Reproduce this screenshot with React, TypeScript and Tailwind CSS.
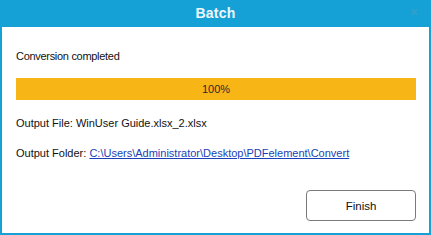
import React from "react";

export default function App() {
  return (
    <div
      className="w-[431px] h-[235px] bg-white flex flex-col border-x-2 border-b-2 border-[#16a1d6] overflow-hidden"
      style={{ fontFamily: '"Liberation Sans", Arial, sans-serif' }}
    >
      {/* Title bar */}
      <div className="relative h-[27px] -mx-[2px] bg-[#16a1d6] flex items-center justify-center shrink-0">
        <span className="text-[14px] font-bold text-[#eef8fc] tracking-[0.2px]">Batch</span>
        <span className="absolute right-[13px] top-[5px] text-[14px] leading-none text-[#3c9fc6]">×</span>
      </div>

      {/* Body */}
      <div className="flex flex-col px-[14px] text-[11px] leading-[14px] text-[#111]">
        <p className="mt-[22px] tracking-[-0.3px]">Conversion completed</p>

        <div className="mt-[15px] mr-[-1px] h-[22px] bg-[#f8b516] flex items-center justify-center text-[#2a2a2a]">
          100%
        </div>

        <p className="mt-[16px]">Output File: WinUser Guide.xlsx_2.xlsx</p>

        <p className="mt-[16px]">
          Output Folder:{" "}
          <a href="#" className="text-[#1a3fb8] underline">
            C:\Users\Administrator\Desktop\PDFelement\Convert
          </a>
        </p>

        <div className="mt-[30px] flex justify-end">
          <button className="w-[110px] h-[31px] mr-[-1px] rounded-[4px] border border-[#7a7a7a] bg-white text-[11.5px] text-[#111]">
            Finish
          </button>
        </div>
      </div>
    </div>
  );
}
